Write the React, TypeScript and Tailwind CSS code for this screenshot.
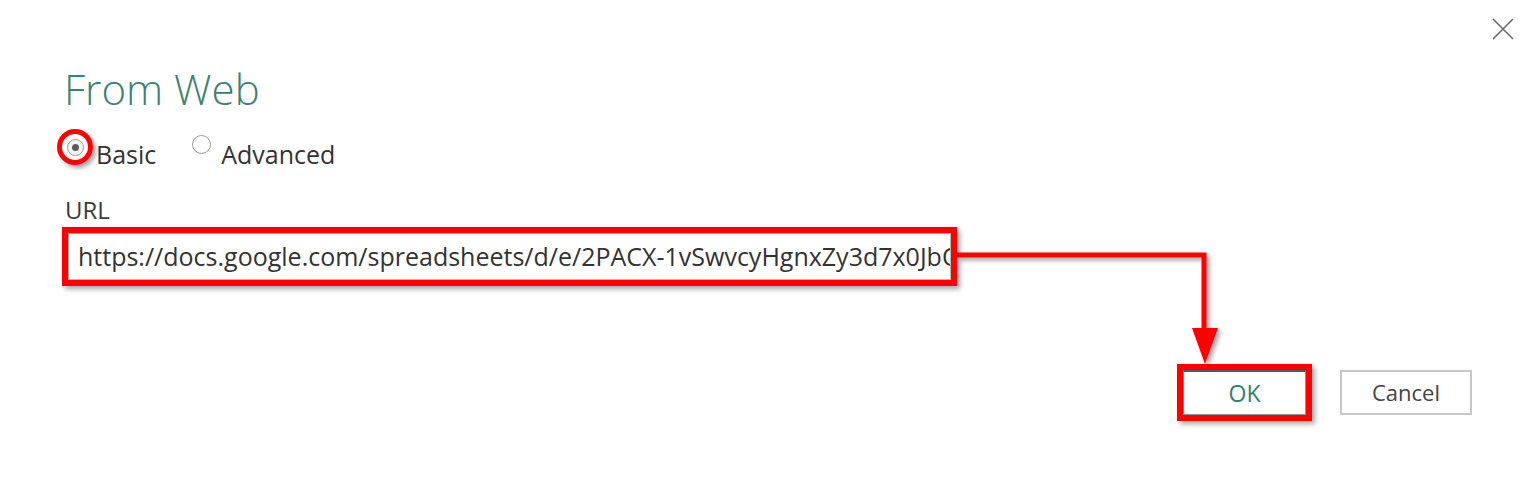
import React from 'react';

const App = () => {
  return (
    <div className="relative flex h-[480px] w-full flex-col overflow-hidden bg-white pl-[62px] pr-[64px] font-['Open_Sans',sans-serif] text-[#333333]">
      <div className="flex items-start justify-between">
        <h1 className="mt-[68px] ml-[2px] text-[42px] leading-[42px] font-light text-[#3d8270]">From Web</h1>
        <button className="mt-[18px] mr-[-42px] h-[22px] w-[22px]">
          <svg viewBox="0 0 22 22" width="22" height="22">
            <path d="M1 1 L21 21 M21 1 L1 21" stroke="#6b6b6b" strokeWidth="1.6" />
          </svg>
        </button>
      </div>

      <div className="mt-[19px] ml-[-5px] flex h-[36px] items-start">
        <div className="flex h-[36px] w-[36px] items-center justify-center rounded-full border-[5px] border-[#ff0000] shadow-[3px_3px_4px_rgba(0,0,0,0.35)]">
          <div className="flex h-[17px] w-[17px] items-center justify-center rounded-full border border-[#9a9a9a] bg-[#f4f4f4]">
            <div className="h-[7px] w-[7px] rounded-full bg-[#5a5a5a]" />
          </div>
        </div>
        <span className="ml-[3px] pt-[7px] text-[25px] leading-[36px]">Basic</span>
        <div className="mt-[6px] ml-[36px] h-[19px] w-[19px] rounded-full border border-[#9a9a9a] bg-white" />
        <span className="ml-[10px] pt-[7px] text-[25px] leading-[36px]">Advanced</span>
      </div>

      <div className="mt-[33px] ml-[3px] text-[24px] leading-[24px] text-[#3a3a3a]">URL</div>

      <div className="mt-[5px] h-[59px] w-[895px] border-[6px] border-[#ff0000] shadow-[3px_3px_5px_rgba(0,0,0,0.35)]">
        <div className="flex h-full w-full items-center overflow-hidden border border-[#a9a9a9] border-r-[#9cc9a8] border-b-[#9cc9a8] bg-white pl-[9px]">
          <span className="whitespace-nowrap text-[25px] text-[#333333]">
            https://docs.google.com/spreadsheets/d/e/2PACX-1vSwvcyHgnxZy3d7x0JbQ
          </span>
        </div>
      </div>

      <div className="mt-[78px] flex items-center justify-end gap-[28px]">
        <div className="h-[57px] w-[135px] border-[6px] border-[#ff0000] shadow-[3px_3px_5px_rgba(0,0,0,0.35)]">
          <button className="flex h-full w-full items-center justify-center border border-[#8a9690] border-t-2 border-t-[#4d5d55] bg-white text-[23px] text-[#2f7f6f]">
            OK
          </button>
        </div>
        <button className="flex h-[45px] w-[132px] items-center justify-center border-2 border-[#c8c8c8] bg-white text-[22px] text-[#444444]">
          Cancel
        </button>
      </div>

      <svg className="pointer-events-none absolute inset-0" width="1536" height="480" viewBox="0 0 1536 480">
        <defs>
          <filter id="sh" x="-10%" y="-10%" width="130%" height="130%">
            <feDropShadow dx="3" dy="3" stdDeviation="2" floodColor="#000" floodOpacity="0.35" />
          </filter>
        </defs>
        <g filter="url(#sh)">
          <path d="M957 255 L1204 255 L1204 332" fill="none" stroke="#ff0000" strokeWidth="5" />
          <path d="M1192 328 L1218 328 L1205 364 Z" fill="#ff0000" />
        </g>
      </svg>
    </div>
  );
};

export default App;
